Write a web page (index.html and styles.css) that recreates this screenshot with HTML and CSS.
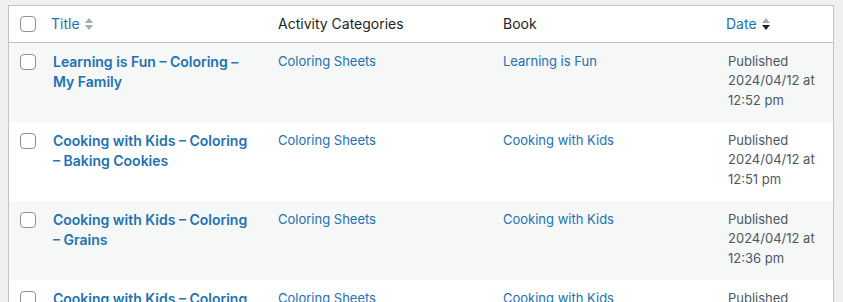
FILE: index.html
```html
<!DOCTYPE html>
<html lang="en">
  <head>
    <meta charset="UTF-8" />
    <meta name="viewport" content="width=device-width, initial-scale=1.0" />
    <title>Posts</title>
    <link rel="stylesheet" href="styles.css">
  </head>
  <body>
    <div class="wrap">
      <table class="list-table">
        <colgroup>
          <col class="col-check" />
          <col />
          <col />
          <col />
          <col class="col-date" />
        </colgroup>
        <thead>
          <tr>
            <td class="check-column"><span class="checkbox"></span></td>
            <th class="sortable">
              <a href="#">Title <span class="sort-indicator"><i class="up"></i><i class="down"></i></span></a>
            </th>
            <th>Activity Categories</th>
            <th>Book</th>
            <th class="sortable sorted">
              <a href="#">Date <span class="sort-indicator"><i class="up"></i><i class="down"></i></span></a>
            </th>
          </tr>
        </thead>
        <tbody>
          <tr class="alt">
            <td class="check-column"><span class="checkbox"></span></td>
            <td class="title-column"><a class="row-title" href="#">Learning is Fun – Coloring –<br>My Family</a></td>
            <td><a href="#">Coloring Sheets</a></td>
            <td><a href="#">Learning is Fun</a></td>
            <td class="date-column">Published<br>2024/04/12 at<br>12:52 pm</td>
          </tr>
          <tr>
            <td class="check-column"><span class="checkbox"></span></td>
            <td class="title-column"><a class="row-title" href="#">Cooking with Kids – Coloring<br>– Baking Cookies</a></td>
            <td><a href="#">Coloring Sheets</a></td>
            <td><a href="#">Cooking with Kids</a></td>
            <td class="date-column">Published<br>2024/04/12 at<br>12:51 pm</td>
          </tr>
          <tr class="alt">
            <td class="check-column"><span class="checkbox"></span></td>
            <td class="title-column"><a class="row-title" href="#">Cooking with Kids – Coloring<br>– Grains</a></td>
            <td><a href="#">Coloring Sheets</a></td>
            <td><a href="#">Cooking with Kids</a></td>
            <td class="date-column">Published<br>2024/04/12 at<br>12:36 pm</td>
          </tr>
          <tr>
            <td class="check-column"><span class="checkbox"></span></td>
            <td class="title-column"><a class="row-title" href="#">Cooking with Kids – Coloring<br>– Fruits</a></td>
            <td><a href="#">Coloring Sheets</a></td>
            <td><a href="#">Cooking with Kids</a></td>
            <td class="date-column">Published<br>2024/04/12 at<br>12:30 pm</td>
          </tr>
        </tbody>
      </table>
    </div>
  </body>
</html>
```

FILE: styles.css
```css
body {
  margin: 0;
  background-color: #f0f0f1;
  font-family: Inter, Roboto, "Liberation Sans", sans-serif;
  font-size: 13px;
  color: #3c434a;
}

.wrap {
  padding: 5px 9px 0 8px;
}

.list-table {
  width: 100%;
  table-layout: fixed;
  border-collapse: separate;
  border-spacing: 0;
  background: #fff;
  border: 1px solid #c3c4c7;
}

.col-check {
  width: 34px;
}

.col-date {
  width: 115px;
}

a {
  color: #2271b1;
  text-decoration: none;
}

thead th,
thead td {
  text-align: left;
  font-weight: 400;
  font-size: 14px;
  line-height: 19.6px;
  color: #1d2327;
  padding: 8px 10px;
  border-bottom: 1px solid #c3c4c7;
}

thead th.sortable {
  padding: 0;
}

thead th.sortable a {
  display: flex;
  align-items: center;
  gap: 5px;
  padding: 8px;
}

.sort-indicator {
  display: inline-flex;
  flex-direction: column;
  gap: 2px;
  margin-top: 1px;
}

.sort-indicator i {
  display: block;
  width: 0;
  height: 0;
  border-left: 4px solid transparent;
  border-right: 4px solid transparent;
}

.sort-indicator .up {
  border-bottom: 5px solid #a7aaad;
}

.sort-indicator .down {
  border-top: 5px solid #a7aaad;
}

.sorted .sort-indicator .down {
  border-top-color: #1d2327;
}

tbody td {
  vertical-align: top;
  padding: 9px 10px 11.5px;
  line-height: 19.5px;
}

tbody tr.alt {
  background-color: #f6f7f7;
}

.check-column {
  padding: 0 0 0 11px;
}

thead .check-column {
  padding: 0 0 0 11px;
  vertical-align: middle;
}

tbody .check-column {
  padding-top: 11px;
}

.checkbox {
  display: block;
  width: 14px;
  height: 14px;
  border: 1px solid #8c8f94;
  border-radius: 4px;
  background: #fff;
}

.row-title {
  font-weight: 600;
  font-size: 14px;
  line-height: 19.6px;
}

.date-column {
  color: #50575e;
}
```
